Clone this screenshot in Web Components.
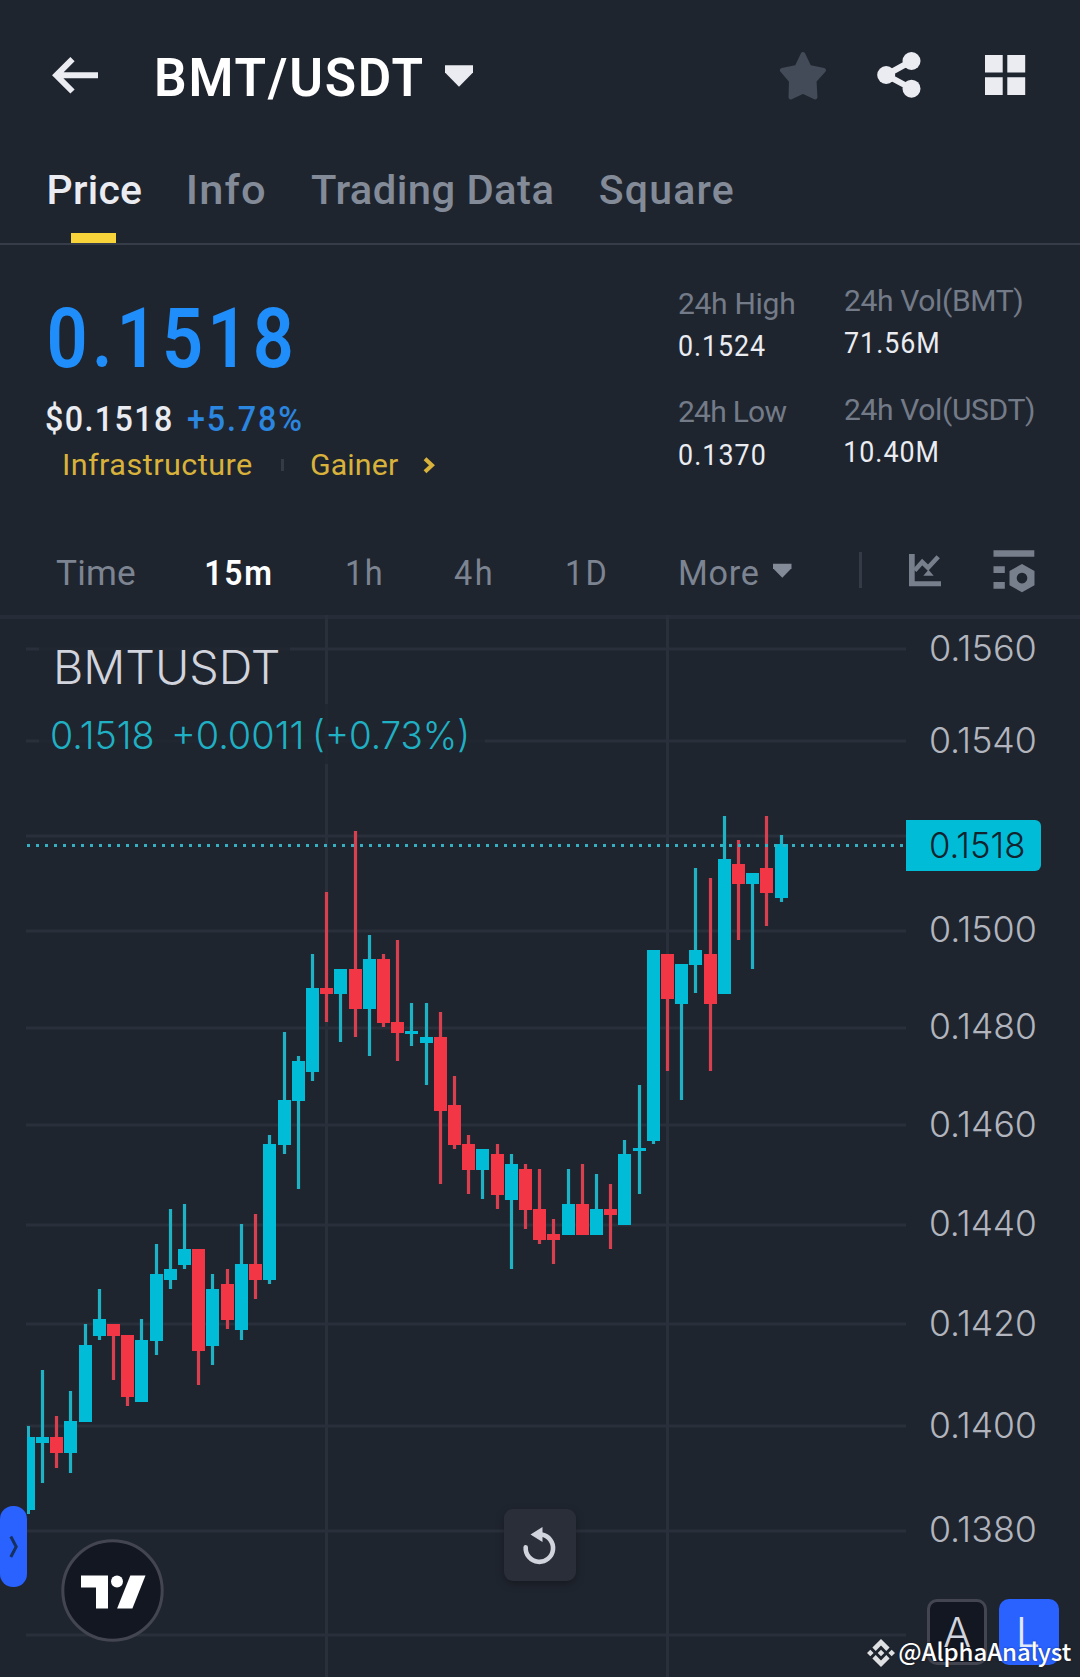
<!DOCTYPE html>
<html lang="en">
<head>
<meta charset="utf-8">
<title>BMT/USDT</title>
<style>
html,body{margin:0;background:#1f252f}
body{width:1080px;height:1677px;overflow:hidden;font-family:Roboto,"Liberation Sans",sans-serif}
</style>
</head>
<body>
<trade-page></trade-page>
<script>
const BG = '#1f252f', CY = '#00bcd6', RD = '#f23645';
const ctx = document.createElement('canvas').getContext('2d');
const UI = 'Roboto, "Liberation Sans", sans-serif';
const CHART = 'Inter, "Liberation Sans", sans-serif';

/* Text whose box is its cap height (cap) by its ink width (w).
   sx sets the glyph stretch; letter-spacing takes up the rest. Chart text is only stretched. */
class FitText extends HTMLElement {
  connectedCallback() {
    const a = n => this.getAttribute(n);
    const w = +a('w'), cap = +a('cap'), weight = a('weight') || 400;
    const chart = a('face') === 'chart';
    const fam = chart ? CHART : a('face') === 'mark' ? '"Noto Sans CJK SC", sans-serif' : UI;
    const text = this.textContent;
    ctx.font = `${weight} 100px ${fam}`;
    const size = 100 * cap / ctx.measureText('H').actualBoundingBoxAscent;
    ctx.font = `${weight} ${size}px ${fam}`;
    const m = ctx.measureText(text);
    const left = m.actualBoundingBoxLeft;
    const ink = m.actualBoundingBoxRight + left;
    let ls = 0, sx = +a('sx') || 1;
    if (chart || text.length < 2) sx = w / ink;
    else ls = (w / sx - ink) / (text.length - 1);
    const dy = cap / 2 - (m.fontBoundingBoxAscent - m.fontBoundingBoxDescent) / 2;
    this.attachShadow({mode: 'open'}).innerHTML = `<style>
      :host{display:block;flex:none;width:${w}px;height:${cap}px}
      span{display:inline-block;vertical-align:top;white-space:pre;font:${weight} ${size}px/${cap}px ${fam};
        letter-spacing:${ls}px;transform-origin:0 50%;transform:translate(${left * sx}px,${dy}px) scaleX(${sx})}
    </style><span><slot></slot></span>`;
  }
}

/* Icon drawn in page units: box = "x y w h". */
const ICONS = {
  back: ['52 55 47 40', '<path d="M98 75.3H56M72.5 59.2 56.3 75.3 72.5 91.5" fill="none" stroke="#eaecf1" stroke-width="6"/>'],
  caret: ['445 63 28 26', '<path d="M445 65.3h28v7.2L459 86.8 445 72.5z" fill="#eaecf1"/>'],
  star: ['779 51 48 50', '<path d="M803 55.3 809.2 68.3 823.7 71.2 814.3 81.8 815.2 98.2 803 92.5 790.8 98.2 791.2 81.8 782.2 71.2 796.8 68.3z" fill="#434b59" stroke="#434b59" stroke-width="4.5" stroke-linejoin="round"/>'],
  share: ['877 51 44 48', '<g fill="#eaecf1"><path d="M911.5 61 886 75 911.5 88.7" fill="none" stroke="#eaecf1" stroke-width="6"/><circle cx="886.2" cy="75" r="9"/><circle cx="911.5" cy="61" r="9"/><circle cx="911.5" cy="88.7" r="9"/></g>'],
  grid: ['985 54 41 42', '<path d="M985 55h17.7v17.5H985zM1007.3 55h17.9v17.5h-17.9zM985 77.3h17.7V95H985zM1007.3 77.3h17.9V95h-17.9z" fill="#eaecf1"/>'],
  next: ['422 455 14 20', '<path d="M425 458.7 432 465.2 425 471.7" fill="none" stroke="#d8b23a" stroke-width="4"/>'],
  down: ['772 561 20 17', '<path d="M773 562.7h18.5v4.5l-9.2 9.6-9.3-9.6z" fill="#848b98"/>'],
  indicator: ['908 553 34 34', '<g fill="#787f8c"><path d="M909 554h5.7v27.3H941v5H909z"/><path d="M914.7 570.5 922.2 562 928 567.7 938.2 556.8" fill="none" stroke="#787f8c" stroke-width="4.6"/><path d="M923.3 575.7h10.4l-5.2-6z"/></g>'],
  settings: ['993 549 42 44', '<g fill="#787f8c"><path d="M993.5 550.3h40.8v6.4h-40.8zM993.5 566.3h11.3v6.7h-11.3zM993.5 582h11.3v6.7h-11.3z"/><path fill-rule="evenodd" d="M1022 564l12.5 7v14.3l-12.5 7-12.5-7V571zM1022 572.8a5.3 5.3 0 1 0 .01 0z"/></g>']
};
class UiIcon extends HTMLElement {
  connectedCallback() {
    const [box, art] = ICONS[this.getAttribute('name')];
    const [, , w, h] = box.split(' ');
    this.attachShadow({mode: 'open'}).innerHTML =
      `<style>:host{display:block;flex:none}svg{display:block}</style><svg width="${w}" height="${h}" viewBox="${box}">${art}</svg>`;
  }
}

class PairHeader extends HTMLElement {
  connectedCallback() {
    this.attachShadow({mode: 'open'}).innerHTML = `<style>
      :host{display:flex;align-items:center;height:150px;padding:0 54px 0 52px;box-sizing:border-box;color:#fff}
      .t{margin:4px 23px 0 57.7px}.c{margin-top:2px}.s{margin-left:auto}.sh{margin:0 64px 0 50px}
    </style><ui-icon name="back"></ui-icon><fit-text class="t" w="265.3" cap="38" weight="600" sx=".96">BMT/USDT</fit-text><ui-icon class="c" name="caret"></ui-icon>
    <ui-icon class="s" name="star"></ui-icon><ui-icon class="sh" name="share"></ui-icon><ui-icon name="grid"></ui-icon>`;
  }
}

class PageTabs extends HTMLElement {
  connectedCallback() {
    this.attachShadow({mode: 'open'}).innerHTML = `<style>
      :host{display:flex;height:95px;box-sizing:border-box;border-bottom:2px solid #363c48;padding:24.5px 0 0 48.6px;color:#848b98}
      .a{color:#eaecf1}.a i{display:block;width:45px;height:9.5px;margin:29.3px 0 0 22.4px;background:#f8d33a}
      .b{margin-left:47.7px}.c{margin-left:47px}.d{margin-left:46.8px}
    </style><div class="a"><fit-text w="92.5" cap="29.5" weight="500">Price</fit-text><i></i></div>
    <fit-text class="b" w="75.3" cap="29.5" weight="500" sx="1.06">Info</fit-text>
    <fit-text class="c" w="241.8" cap="29.5" weight="500" sx="1.02">Trading Data</fit-text>
    <fit-text class="d" w="133.2" cap="29.5" weight="500">Square</fit-text>`;
  }
}

class StatPair extends HTMLElement {
  connectedCallback() {
    const a = n => this.getAttribute(n);
    this.attachShadow({mode: 'open'}).innerHTML = `<style>
      :host{display:flex;flex-direction:column;gap:21.4px;color:#eaecf1}.l{color:#747b88}.v{margin-bottom:.5px}
    </style><fit-text class="l" w="${a('lw')}" cap="20.8" sx="1.04">${a('label')}</fit-text><fit-text class="v" w="${a('vw')}" cap="20.8" weight="450" sx=".93">${a('value')}</fit-text>`;
  }
}

class PriceSummary extends HTMLElement {
  connectedCallback() {
    this.attachShadow({mode: 'open'}).innerHTML = `<style>
      :host{display:flex;height:295px}
      .left{width:678.7px;padding-top:64px;box-sizing:border-box}
      .big{margin-left:50px;color:#1f8efa}
      .row{display:flex;align-items:center}
      .sub{margin:38.2px 0 0 46.3px;gap:17.3px;color:#eaecf1}.sub .p{color:#2b86e0}
      .tags{margin:24.2px 0 0 64.4px;color:#d8b23a;height:20.5px}
      .tags i{width:3px;height:12px;background:#343b47;margin:0 26.6px 0 28.6px}
      .tags ui-icon{margin-left:24px}
      .col{display:flex;flex-direction:column;gap:44.8px;width:166px}
      .c1{padding-top:49.2px}.c2{padding-top:46.3px}
    </style><div class="left">
      <fit-text class="big" w="241" cap="58.8" weight="600" sx=".87">0.1518</fit-text>
      <div class="row sub"><fit-text w="124.7" cap="25" weight="500" sx=".93">$0.1518</fit-text><fit-text class="p" w="113.5" cap="25" weight="500" sx=".93">+5.78%</fit-text></div>
      <div class="row tags"><fit-text w="188" cap="20.8" sx="1.06">Infrastructure</fit-text><i></i><fit-text w="87.4" cap="20.8" sx="1.05">Gainer</fit-text><ui-icon name="next"></ui-icon></div>
    </div>
    <div class="col c1"><stat-pair label="24h High" lw="114.7" value="0.1524" vw="86"></stat-pair><stat-pair label="24h Low" lw="108.3" value="0.1370" vw="85.7"></stat-pair></div>
    <div class="col c2"><stat-pair label="24h Vol(BMT)" lw="176.5" value="71.56M" vw="92.7"></stat-pair><stat-pair label="24h Vol(USDT)" lw="188.3" value="10.40M" vw="92"></stat-pair></div>`;
  }
}

class IntervalBar extends HTMLElement {
  connectedCallback() {
    const items = [['Time', 55.8, 78.6, 400, 1.03], ['15m', 206.2, 65, 600, .92], ['1h', 347, 34, 400, .95], ['4h', 454.2, 37, 400, .95], ['1D', 567, 38.4, 400, .95], ['More', 680, 77.7, 400, 1]];
    let x = 0, h = '';
    for (const [t, l, w, wt, sx] of items) {
      h += `<fit-text style="margin-left:${l - x}px${wt > 400 ? ';color:#fff' : ''}" w="${w}" cap="24.6" weight="${wt}" sx="${sx}">${t}</fit-text>`;
      x = l + w;
    }
    this.attachShadow({mode: 'open'}).innerHTML = `<style>
      :host{display:flex;align-items:center;height:75px;box-sizing:border-box;padding-bottom:8px;color:#7d8491}
      .d{margin:-7px 0 0 14.3px}i{width:3px;height:36px;background:#343a46;margin:-7px 0 0 66.7px}.n{margin:-7px 0 0 46.3px}.s{margin:-5px 0 0 51px}
    </style>${h}<ui-icon class="d" name="down"></ui-icon><i></i><ui-icon class="n" name="indicator"></ui-icon><ui-icon class="s" name="settings"></ui-icon>`;
  }
}

/* [x, high, bodyTop, bodyBottom, low, up] */
const C = [
[42.5,1370,1437,1443,1483,1],[56.5,1416,1437,1453,1468,0],[70.5,1391,1421,1453,1473,1],[85.5,1324,1345,1422,1422,1],
[99.5,1289,1319,1336,1340,1],[113.5,1324,1324,1336,1380,0],[127.5,1335,1335,1397,1406,0],[141.5,1319,1340,1402,1402,1],[156.5,1244,1274,1341,1355,1],
[170.5,1209,1269,1280,1289,1],[184.5,1204,1249,1265,1269,1],[198.5,1249,1249,1351,1385,0],[212.5,1274,1289,1346,1365,1],[227.5,1269,1284,1320,1329,0],
[241.5,1224,1264,1330,1340,1],[255.5,1214,1264,1280,1299,0],[269.5,1135,1144,1280,1284,1],[284.5,1032,1100,1145,1154,1],[298.5,1056,1061,1101,1189,1],
[312.5,954,988,1072,1081,1],[326.5,892,988,994,1022,0],[340.5,969,969,994,1042,1],[355.5,831,969,1009,1037,0],[369.5,935,959,1009,1056,1],
[383.5,954,959,1023,1027,0],[397.5,940,1022,1033,1061,0],[411.5,1003,1031,1034,1046,1],[426.5,1003,1037,1043,1085,1],[440.5,1012,1037,1111,1184,0],
[454.5,1076,1105,1145,1149,0],[468.5,1135,1144,1170,1194,0],[482.5,1149,1149,1170,1199,1],[497.5,1144,1154,1195,1209,0],[511.5,1154,1164,1200,1269,1],
[525.5,1164,1169,1210,1229,0],[539.5,1169,1209,1240,1244,0],[553.5,1219,1234,1240,1264,0],[568.5,1169,1204,1235,1235,1],[582.5,1164,1204,1235,1235,0],
[596.5,1174,1209,1235,1235,1],[610.5,1184,1209,1215,1249,0],[624.5,1140,1154,1225,1225,1],[639.5,1085,1148,1151,1194,1],[653.5,950,950,1141,1144,1],
[667.5,954,954,999,1071,0],[681.5,964,964,1004,1100,1],[695.5,868,950,965,993,1],[710.5,878,954,1004,1071,0],[724.5,816,859,994,994,1],
[738.5,840,864,884,940,0],[752.5,873,873,884,969,1],[766.5,816,868,893,926,0],[781.5,835,844,898,902,1]];

class CandlePlot extends HTMLElement {
  connectedCallback() {
    const ys = [649, 741, 836, 931, 1028, 1125, 1225, 1324, 1426, 1531, 1635];
    let g = '';
    for (const y of ys) g += `<rect x="26" y="${y - 1.5}" width="880" height="3"/>`;
    for (const x of [326.5, 667.5]) g += `<rect x="${x - 1.5}" y="615" width="3" height="1062"/>`;
    let c = `<path fill="#1fb1c4" d="M27 1426h3v88h-3z"/><path fill="${CY}" d="M27 1437h8v73h-8z"/>`, dots = '';
    for (const [x, hi, t, b, lo, up] of C)
      c += `<rect x="${x - 1.6}" y="${hi}" width="3.2" height="${lo - hi}" fill="${up ? '#1fb1c4' : '#d8404f'}"/><rect x="${x - 6.5}" y="${t}" width="13" height="${b - t}" fill="${up ? CY : RD}"/>`;
    for (let x = 27; x < 904; x += 9) dots += `<rect x="${x}" y="844" width="3" height="3"/>`;
    this.attachShadow({mode: 'open'}).innerHTML = `<style>:host{display:block}svg{display:block}</style>
    <svg width="1080" height="1062" viewBox="0 615 1080 1062">
      <rect y="615" width="1080" height="4" fill="#272d38"/>
      <g fill="#2a303b">${g}</g>
      <path fill="${BG}" fill-opacity=".8" d="M39 640h251v60H39zM39 704h446v60H39z"/>
      ${c}<g fill="#36afc1">${dots}</g>
    </svg>`;
  }
}

class PriceScale extends HTMLElement {
  connectedCallback() {
    const rows = [['0.1560', 635.9], ['0.1540', 727.8], ['0.1500', 917.2], ['0.1480', 1014], ['0.1460', 1112], ['0.1440', 1211.2], ['0.1420', 1310.8], ['0.1400', 1412.8], ['0.1380', 1517]];
    let y = 615, h = '';
    for (const [t, top] of rows) {
      if (t === '0.1500') { h += `<div class="tag" style="margin-top:${820 - y}px"><fit-text face="chart" w="93" cap="25.5" weight="300">0.1518</fit-text></div>`; y = 871; }
      h += `<fit-text class="l" face="chart" style="margin-top:${top - y}px" w="104.4" cap="25.3" weight="300">${t}</fit-text>`;
      y = top + 25.3;
    }
    this.attachShadow({mode: 'open'}).innerHTML = `<style>
      :host{display:flex;flex-direction:column;width:174px;height:1062px;color:#b2b5be}
      .l{margin-left:25.4px}
      .tag{display:flex;align-items:center;width:135px;height:51px;box-sizing:border-box;padding-left:25.4px;background:${CY};border-radius:0 6px 6px 0;color:#12232e}
    </style>${h}`;
  }
}

class ChartLegend extends HTMLElement {
  connectedCallback() {
    this.attachShadow({mode: 'open'}).innerHTML = `<style>
      :host{display:block;padding:35.8px 0 0 52.4px}
      .n{margin-left:4.2px;color:#d1d4dc}.r{display:flex;margin-top:37.4px;color:#1fb0c4}
      .b{margin-left:21.3px}.c{margin-left:14px}
    </style><fit-text class="n" face="chart" w="221.4" cap="33.4" weight="300">BMTUSDT</fit-text>
    <div class="r"><fit-text face="chart" w="100.6" cap="27.5" weight="300">0.1518</fit-text><fit-text class="b" face="chart" w="127.6" cap="27.5" weight="300">+0.0011</fit-text><fit-text class="c" face="chart" w="150" cap="27.5" weight="300">(+0.73%)</fit-text></div>`;
  }
}

class ScaleButton extends HTMLElement {
  connectedCallback() {
    this.attachShadow({mode: 'open'}).innerHTML = `<style>
      :host{display:flex;justify-content:center;width:60px;height:66px;box-sizing:border-box;padding-top:15px;background:#131722;border:3px solid #434651;border-radius:10px;color:#d1d4dc}
      :host([on]){background:#2962ff;border-color:#2962ff;color:#e3e9fb}
    </style><slot></slot>`;
  }
}

class TradeChart extends HTMLElement {
  connectedCallback() {
    this.attachShadow({mode: 'open'}).innerHTML = `<style>
      :host{display:block;position:relative;height:1062px}
      price-scale{position:absolute;left:906px;top:0}
      chart-legend{position:absolute;left:0;top:0}
      .drawer{position:absolute;left:0;top:891px;width:27px;height:81px;border-radius:13px;background:#2962ff}
      .tv{position:absolute;left:61px;top:923.5px}
      .reset{position:absolute;left:503.5px;top:894px;width:72px;height:72px;border-radius:9px;background:#2a2e39;box-shadow:0 3px 8px rgba(0,0,0,.3)}
      .btns{position:absolute;left:927.3px;top:984px;display:flex;gap:11.7px}
      .mark{position:absolute;left:866.8px;top:1024px;display:flex;color:#fff;gap:4.5px;text-shadow:0 0 2px rgba(0,0,0,.5)}
      .mark fit-text{margin-top:5px}svg{display:block}
    </style><candle-plot></candle-plot><chart-legend></chart-legend><price-scale></price-scale>
    <div class="drawer"><svg width="27" height="81" viewBox="0 1506 27 81"><path d="M10.8 1536.5 16.2 1546.7 10.8 1557" fill="none" stroke="#16305f" stroke-width="3"/></svg></div>
    <svg class="tv" width="103" height="103" viewBox="61 1538.5 103 103"><circle cx="112.5" cy="1590" r="49.7" fill="#131722" stroke="#434651" stroke-width="3"/>
      <g fill="#fff"><path d="M81 1575h27v33H96v-21H81z"/><circle cx="117" cy="1581" r="6"/><path d="M130.3 1575h15.2L132.4 1608h-15.3z"/></g></svg>
    <div class="reset"><svg width="72" height="72" viewBox="503.5 1509 72 72"><path d="M525.2 1547.3A13.7 13.7 0 1 0 541 1534.6" fill="none" stroke="#d1d4dc" stroke-width="4.6" stroke-linecap="round"/><path d="M530 1534.5 542 1527v15z" fill="#d1d4dc"/></svg></div>
    <div class="btns"><scale-button><fit-text face="chart" w="26.5" cap="30" weight="300">A</fit-text></scale-button><scale-button on><fit-text face="chart" w="20" cap="30" weight="300">L</fit-text></scale-button></div>
    <div class="mark"><svg width="28" height="28" viewBox="0 0 28 28"><g fill="#dfe0e2"><path d="M14 0l8.6 8.6-3.3 3.3L14 6.6l-5.3 5.3-3.3-3.3zM14 28l8.6-8.6-3.3-3.3-5.3 5.3-5.3-5.3-3.3 3.3zM14 10.7l3.3 3.3-3.3 3.3-3.3-3.3zM3.3 10.7 6.6 14l-3.3 3.3L0 14zM24.7 10.7 28 14l-3.3 3.3-3.3-3.3z"/></g></svg><fit-text face="mark" w="172.5" cap="17.8" weight="500">@AlphaAnalyst</fit-text></div>`;
  }
}

class TradePage extends HTMLElement {
  connectedCallback() {
    this.attachShadow({mode: 'open'}).innerHTML = `<style>:host{display:flex;flex-direction:column;width:1080px;height:1677px;background:${BG};overflow:hidden}</style>
    <pair-header></pair-header><page-tabs></page-tabs><price-summary></price-summary><interval-bar></interval-bar><trade-chart></trade-chart>`;
  }
}
const defs = {'fit-text': FitText, 'ui-icon': UiIcon, 'pair-header': PairHeader, 'page-tabs': PageTabs, 'stat-pair': StatPair, 'price-summary': PriceSummary, 'interval-bar': IntervalBar, 'candle-plot': CandlePlot, 'price-scale': PriceScale, 'chart-legend': ChartLegend, 'scale-button': ScaleButton, 'trade-chart': TradeChart, 'trade-page': TradePage};
for (const [n, c] of Object.entries(defs)) customElements.define(n, c);
</script>
</body>
</html>
